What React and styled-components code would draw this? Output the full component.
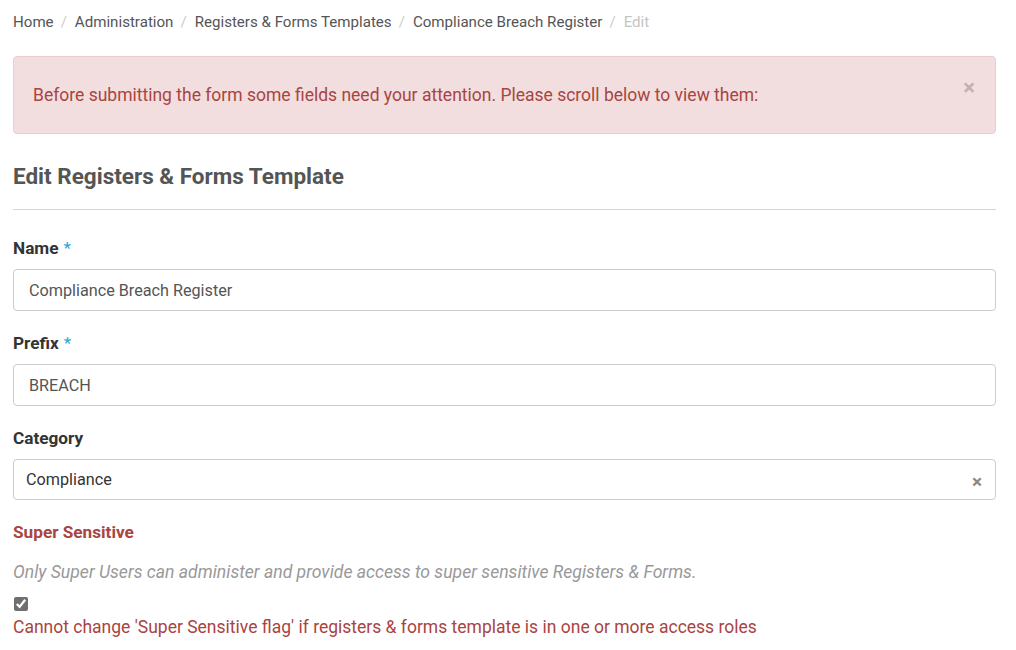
import React, { useState } from 'react'
import styled, { createGlobalStyle } from 'styled-components'

const Global = createGlobalStyle`
  body {
    margin: 0;
    background: #ffffff;
    font-family: Roboto, "Liberation Sans", sans-serif;
    color: #333333;
  }
  * { box-sizing: border-box; }
`

const Page = styled.div`
  padding: 11px 20px 0 13px;
`

const Crumbs = styled.ol`
  display: flex;
  list-style: none;
  margin: 0;
  padding: 0;
  font-size: 15.1px;
  line-height: 23px;
  color: #555555;

  li + li::before {
    content: '/';
    color: #cccccc;
    padding: 0 8px 0 7px;
  }
`

const Crumb = styled.li`
  color: ${p => (p.active ? '#c4c4c4' : '#555555')};
`

const Alert = styled.div`
  display: flex;
  justify-content: space-between;
  align-items: flex-start;
  margin-top: 22px;
  padding: 26px 20px 26px 19px;
  background: #f2dede;
  border: 1px solid #ebccd1;
  border-radius: 4px;
  color: #a94442;
  font-size: 17.5px;
  line-height: 24px;
`

const Close = styled.button`
  border: 0;
  background: none;
  padding: 0;
  margin-top: -6px;
  font-family: inherit;
  font-size: 22px;
  font-weight: 700;
  color: #000;
  opacity: 0.2;
  line-height: 22px;
  cursor: pointer;
`

const Title = styled.h2`
  margin: 27px 0 0;
  padding-bottom: 18px;
  border-bottom: 1px solid #d6d6d6;
  font-size: 22.5px;
  line-height: 30px;
  font-weight: 700;
  color: #555555;
`

const Group = styled.div`
  margin-top: ${p => p.top || 20}px;
`

const Label = styled.label`
  display: block;
  font-size: 17.2px;
  line-height: 24px;
  font-weight: 700;
  color: ${p => (p.error ? '#a94442' : '#333333')};
  margin-bottom: 9px;
`

const Star = styled.span`
  color: #2aa9d8;
  font-weight: 400;
  margin-left: 5px;
`

const Input = styled.input`
  display: block;
  width: 100%;
  height: 42px;
  padding: 0 15px;
  border: 1px solid #cccccc;
  border-radius: 4px;
  font-family: inherit;
  font-size: 16.2px;
  color: #555555;
  outline: none;
`

const Select = styled.div`
  display: flex;
  align-items: center;
  justify-content: space-between;
  height: 41px;
  padding: 0 13px 0 12px;
  border: 1px solid #cccccc;
  border-radius: 4px;
  font-size: 16.2px;
  color: #333333;
`

const Clear = styled.span`
  font-size: 19px;
  font-weight: 700;
  color: #888888;
  line-height: 1;
  margin-top: 3px;
`

const Help = styled.p`
  margin: 16px 0 0;
  font-size: 17.6px;
  line-height: 24px;
  font-style: italic;
  color: #999999;
`

const Check = styled.input`
  display: block;
  width: 14px;
  height: 14px;
  margin: 13px 0 0 1px;
  accent-color: #6f6f6f;
`

const ErrorText = styled.div`
  font-size: 17.5px;
  line-height: 24px;
  color: #a94442;
  margin-top: 4px;
`

const App = () => {
  const [form, setForm] = useState({
    name: 'Compliance Breach Register',
    prefix: 'BREACH',
    sensitive: true,
  })
  const [alertOpen, setAlertOpen] = useState(true)

  const handleChange = ev => {
    const { name, value, type, checked } = ev.target
    setForm(prev => ({ ...prev, [name]: type === 'checkbox' ? checked : value }))
  }

  return (
    <>
      <Global />
      <Page>
        <Crumbs>
          <Crumb>Home</Crumb>
          <Crumb>Administration</Crumb>
          <Crumb>Registers &amp; Forms Templates</Crumb>
          <Crumb>Compliance Breach Register</Crumb>
          <Crumb active>Edit</Crumb>
        </Crumbs>

        {alertOpen && (
          <Alert>
            <span>Before submitting the form some fields need your attention. Please scroll below to view them:</span>
            <Close type="button" onClick={() => setAlertOpen(false)}>×</Close>
          </Alert>
        )}

        <Title>Edit Registers &amp; Forms Template</Title>

        <Group top={26}>
          <Label>Name<Star>*</Star></Label>
          <Input type="text" name="name" value={form.name} onChange={handleChange} />
        </Group>

        <Group>
          <Label>Prefix<Star>*</Star></Label>
          <Input type="text" name="prefix" value={form.prefix} onChange={handleChange} />
        </Group>

        <Group>
          <Label>Category</Label>
          <Select>
            <span>Compliance</span>
            <Clear>×</Clear>
          </Select>
        </Group>

        <Group>
          <Label error>Super Sensitive</Label>
          <Help>Only Super Users can administer and provide access to super sensitive Registers &amp; Forms.</Help>
          <Check type="checkbox" name="sensitive" checked={form.sensitive} onChange={handleChange} />
          <ErrorText>Cannot change 'Super Sensitive flag' if registers &amp; forms template is in one or more access roles</ErrorText>
        </Group>
      </Page>
    </>
  )
}

export default App
